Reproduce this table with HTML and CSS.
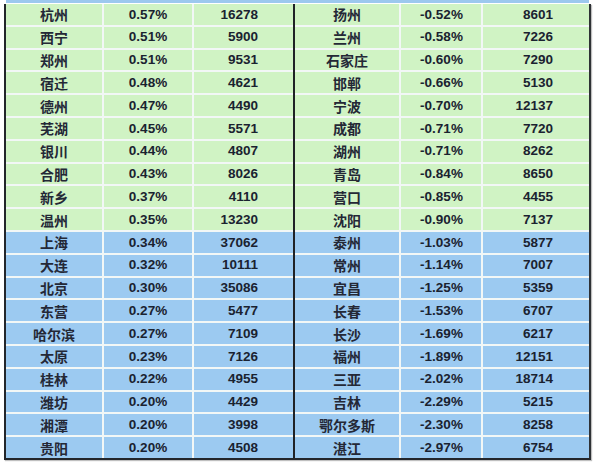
FILE: index.html
```html
<!DOCTYPE html>
<html lang="zh">
<head>
<meta charset="utf-8">
<link rel="stylesheet" href="styles.css">
</head>
<body>
<div class="sheet">
  <div class="top-strip"></div>
  <div class="table">
    <div class="half left">
      <div class="c n g">杭州</div><div class="c p g">0.57%</div><div class="c v g">16278</div>
      <div class="c n g">西宁</div><div class="c p g">0.51%</div><div class="c v g">5900</div>
      <div class="c n g">郑州</div><div class="c p g">0.51%</div><div class="c v g">9531</div>
      <div class="c n g">宿迁</div><div class="c p g">0.48%</div><div class="c v g">4621</div>
      <div class="c n g">德州</div><div class="c p g">0.47%</div><div class="c v g">4490</div>
      <div class="c n g">芜湖</div><div class="c p g">0.45%</div><div class="c v g">5571</div>
      <div class="c n g">银川</div><div class="c p g">0.44%</div><div class="c v g">4807</div>
      <div class="c n g">合肥</div><div class="c p g">0.43%</div><div class="c v g">8026</div>
      <div class="c n g">新乡</div><div class="c p g">0.37%</div><div class="c v g">4110</div>
      <div class="c n g">温州</div><div class="c p g">0.35%</div><div class="c v g">13230</div>
      <div class="c n b">上海</div><div class="c p b">0.34%</div><div class="c v b">37062</div>
      <div class="c n b">大连</div><div class="c p b">0.32%</div><div class="c v b">10111</div>
      <div class="c n b">北京</div><div class="c p b">0.30%</div><div class="c v b">35086</div>
      <div class="c n b">东营</div><div class="c p b">0.27%</div><div class="c v b">5477</div>
      <div class="c n b">哈尔滨</div><div class="c p b">0.27%</div><div class="c v b">7109</div>
      <div class="c n b">太原</div><div class="c p b">0.23%</div><div class="c v b">7126</div>
      <div class="c n b">桂林</div><div class="c p b">0.22%</div><div class="c v b">4955</div>
      <div class="c n b">潍坊</div><div class="c p b">0.20%</div><div class="c v b">4429</div>
      <div class="c n b">湘潭</div><div class="c p b">0.20%</div><div class="c v b">3998</div>
      <div class="c n b">贵阳</div><div class="c p b">0.20%</div><div class="c v b">4508</div>
    </div>
    <div class="divider"></div>
    <div class="half right">
      <div class="c n g">扬州</div><div class="c p g">-0.52%</div><div class="c v g">8601</div>
      <div class="c n g">兰州</div><div class="c p g">-0.58%</div><div class="c v g">7226</div>
      <div class="c n g">石家庄</div><div class="c p g">-0.60%</div><div class="c v g">7290</div>
      <div class="c n g">邯郸</div><div class="c p g">-0.66%</div><div class="c v g">5130</div>
      <div class="c n g">宁波</div><div class="c p g">-0.70%</div><div class="c v g">12137</div>
      <div class="c n g">成都</div><div class="c p g">-0.71%</div><div class="c v g">7720</div>
      <div class="c n g">湖州</div><div class="c p g">-0.71%</div><div class="c v g">8262</div>
      <div class="c n g">青岛</div><div class="c p g">-0.84%</div><div class="c v g">8650</div>
      <div class="c n g">营口</div><div class="c p g">-0.85%</div><div class="c v g">4455</div>
      <div class="c n g">沈阳</div><div class="c p g">-0.90%</div><div class="c v g">7137</div>
      <div class="c n b">泰州</div><div class="c p b">-1.03%</div><div class="c v b">5877</div>
      <div class="c n b">常州</div><div class="c p b">-1.14%</div><div class="c v b">7007</div>
      <div class="c n b">宜昌</div><div class="c p b">-1.25%</div><div class="c v b">5359</div>
      <div class="c n b">长春</div><div class="c p b">-1.53%</div><div class="c v b">6707</div>
      <div class="c n b">长沙</div><div class="c p b">-1.69%</div><div class="c v b">6217</div>
      <div class="c n b">福州</div><div class="c p b">-1.89%</div><div class="c v b">12151</div>
      <div class="c n b">三亚</div><div class="c p b">-2.02%</div><div class="c v b">18714</div>
      <div class="c n b">吉林</div><div class="c p b">-2.29%</div><div class="c v b">5215</div>
      <div class="c n b">鄂尔多斯</div><div class="c p b">-2.30%</div><div class="c v b">8258</div>
      <div class="c n b">湛江</div><div class="c p b">-2.97%</div><div class="c v b">6754</div>
    </div>
  </div>
</div>
</body>
</html>
```
FILE: styles.css
```css
html, body {
  margin: 0;
  padding: 0;
  background: #ffffff;
}
body {
  width: 600px;
  height: 473px;
  overflow: hidden;
  font-family: "Liberation Sans", "Noto Sans CJK SC", sans-serif;
  font-weight: 700;
  font-size: 13.5px;
  color: #1a2230;
}
.sheet {
  margin-left: 4px;
  width: 587px;
}
.top-strip {
  height: 3px;
  margin: 0 0 1px 2px;
  width: 583px;
  background: #9cc8ee;
}
.table {
  display: flex;
  border-left: 2px solid #23262b;
  border-right: 2px solid #2e3135;
  border-bottom: 2px solid #23262b;
  box-shadow: 1px 1px 1px rgba(0,0,0,0.25);
  background: #f2f8f5;
}
.divider {
  width: 2px;
  background: #1f2226;
}
.half {
  display: grid;
  grid-auto-rows: 20.8px;
  row-gap: 2px;
  column-gap: 2px;
  background: #f2f7f6;
}
.left {
  grid-template-columns: 96px 88px 99px;
}
.right {
  grid-template-columns: 104px 80px 106px;
}
.c {
  display: flex;
  align-items: center;
  line-height: 1;
}
.g {
  background: #d0f3c4;
}
.b {
  background: #9ccaf1;
}
.n {
  justify-content: center;
  font-family: "Noto Sans CJK SC", sans-serif;
  font-weight: 700;
  font-size: 14px;
  color: #242836;
}
.p {
  justify-content: center;
}
.right .p {
  padding-left: 1px;
}
.v {
  justify-content: flex-end;
}
.left .v {
  padding-right: 35px;
}
.right .v {
  padding-right: 36px;
}
```
